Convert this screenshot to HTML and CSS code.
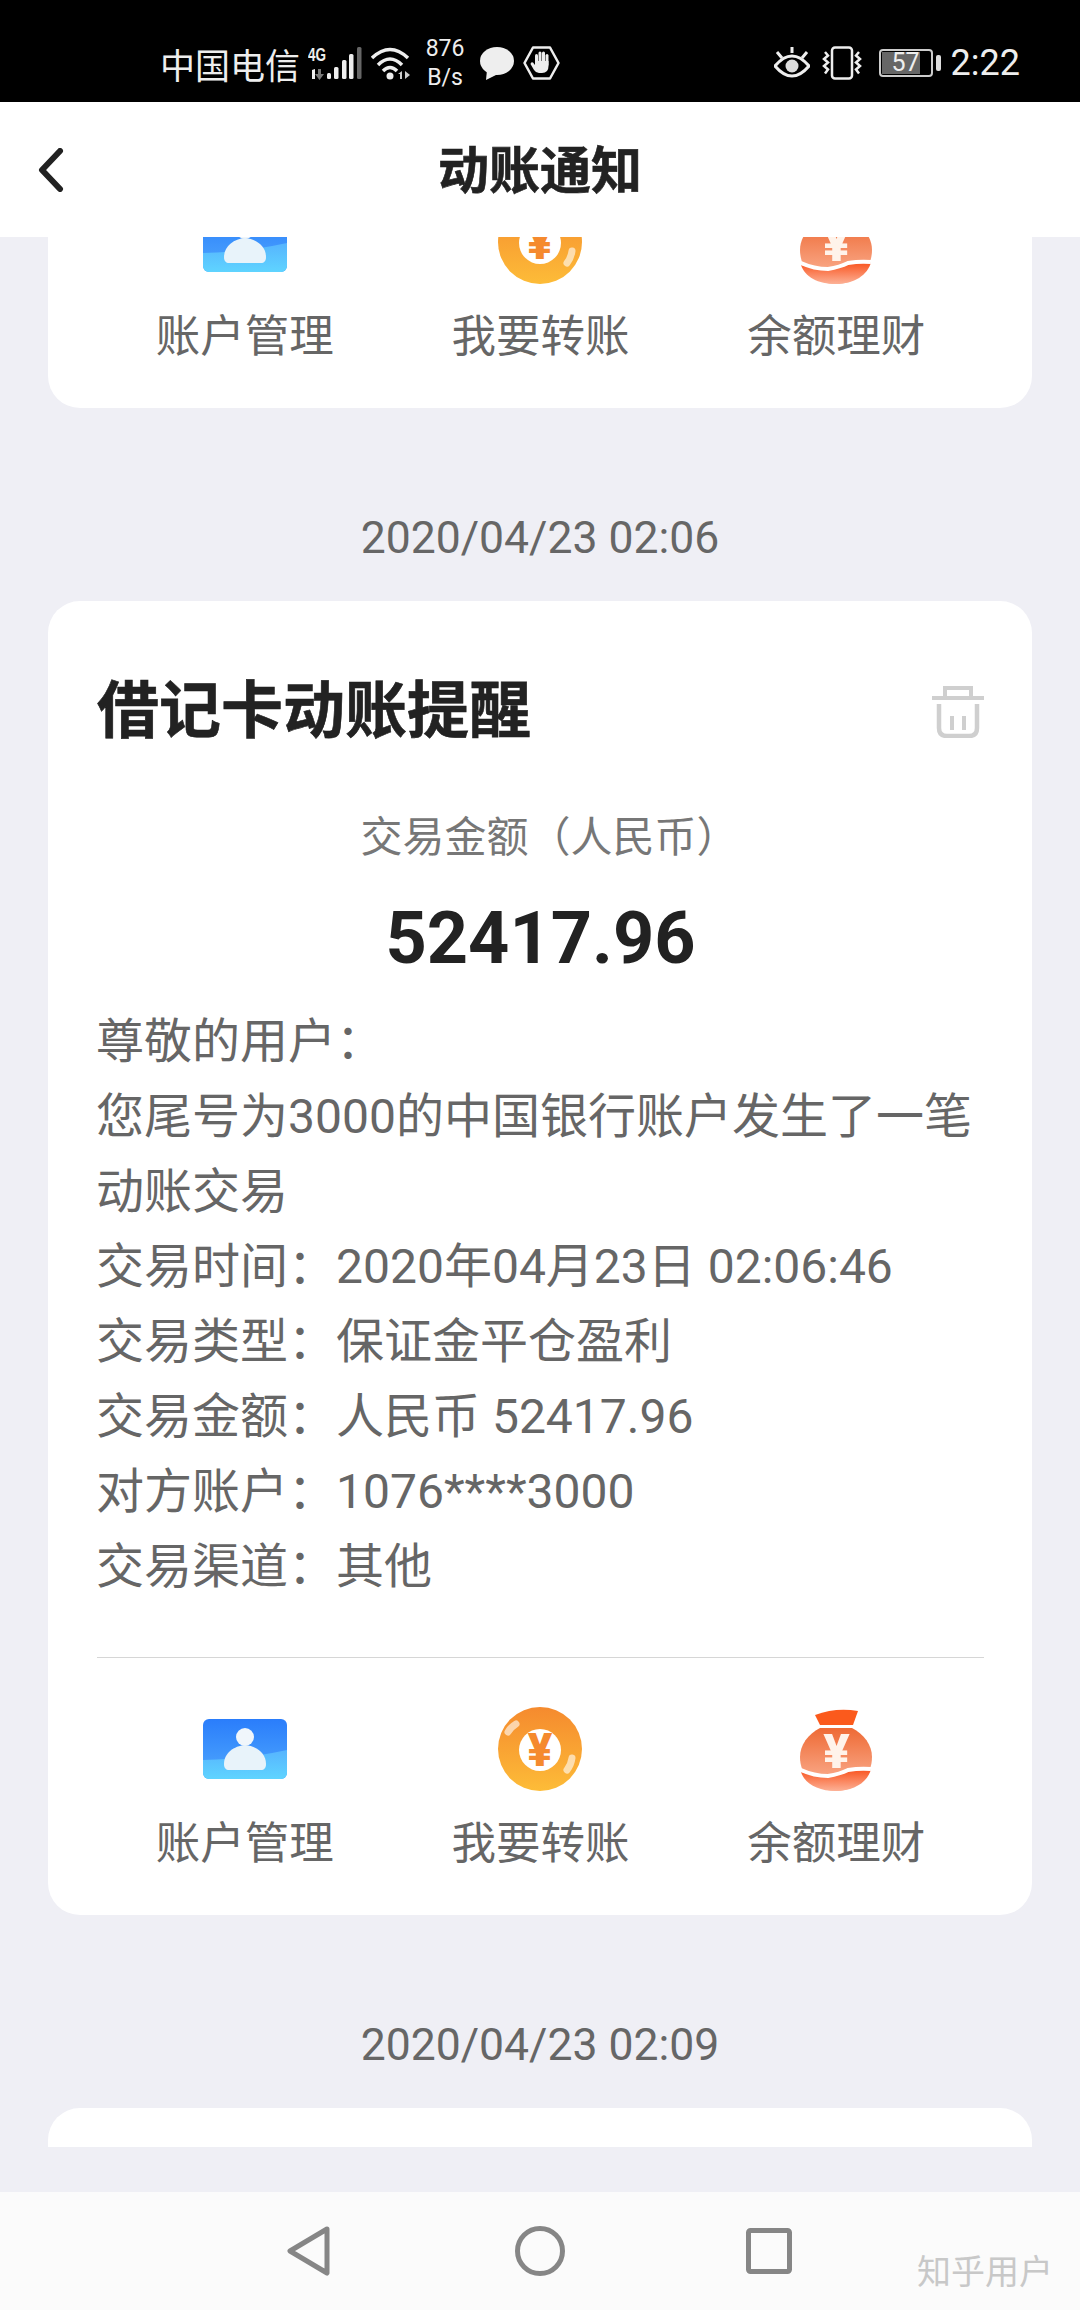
FILE: index.html
```html
<!DOCTYPE html>
<html lang="zh-CN">
<head>
    <meta charset="UTF-8">
    <meta name="viewport" content="width=device-width, initial-scale=1.0">
    <title>动账通知</title>
    <link rel="stylesheet" href="styles.css">
</head>
<body>
    <svg class="sprites" width="0" height="0" aria-hidden="true">
        <defs>
            <linearGradient id="blue-grad" x1="0" y1="0" x2="0" y2="1">
                <stop offset="0" stop-color="#2a7dfb"/>
                <stop offset="1" stop-color="#4fa8fd"/>
            </linearGradient>
            <linearGradient id="blue-low" x1="0" y1="0" x2="0" y2="1">
                <stop offset="0" stop-color="#56b4fe"/>
                <stop offset="1" stop-color="#5fd4ff"/>
            </linearGradient>
            <linearGradient id="coin-grad" x1="0" y1="0" x2="0" y2="1">
                <stop offset="0" stop-color="#f58a2e"/>
                <stop offset="1" stop-color="#fdbc38"/>
            </linearGradient>
            <linearGradient id="bag-grad" x1="0" y1="0" x2="0" y2="1">
                <stop offset="0" stop-color="#ee6a35"/>
                <stop offset="1" stop-color="#fcb79b"/>
            </linearGradient>
            <linearGradient id="bag-low" x1="0" y1="0" x2="0" y2="1">
                <stop offset="0" stop-color="#f9501a"/>
                <stop offset="1" stop-color="#fcb196"/>
            </linearGradient>
            <symbol id="icon-account" viewBox="0 0 84 60">
                <rect width="84" height="60" rx="6" fill="url(#blue-grad)"/>
                <path d="M0 41 Q44 40 84 31 V54 a6 6 0 0 1 -6 6 H6 a6 6 0 0 1 -6 -6 Z" fill="url(#blue-low)"/>
                <circle cx="42" cy="18" r="9" fill="#f0f6fb"/>
                <path d="M21 45 C21 34 31 27 42 26 C53 27 63 34 63 45 C63 49 61 51 58 51 H26 C23 51 21 49 21 45 Z" fill="#e8f3fa"/>
            </symbol>
            <symbol id="icon-transfer" viewBox="0 0 84 84">
                <circle cx="42" cy="42" r="42" fill="url(#coin-grad)"/>
                <circle cx="42" cy="43" r="21" fill="#fff"/>
                <text x="42" y="59" text-anchor="middle" class="coin-yen">¥</text>
                <path d="M10 25 Q13 20 18 17" fill="none" stroke="#fff" stroke-opacity=".6" stroke-width="7" stroke-linecap="round"/>
                <path d="M74 51 Q73 58 69 63" fill="none" stroke="#fff" stroke-opacity=".6" stroke-width="7" stroke-linecap="round"/>
            </symbol>
            <symbol id="icon-finance" viewBox="0 0 72 84">
                <path d="M15 8 Q36 0 58 4 L53 18 H20 Z" fill="#fb5a1c"/>
                <path d="M20 21 H52 C64 27 72 38 72 50 C72 70 56 84 36 84 C16 84 0 70 0 50 C0 38 8 27 20 21 Z" fill="url(#bag-grad)"/>
                <path d="M1 65 Q14 69 28 69 Q40 67 48 63 Q60 61 71 62 C68 75 54 84 36 84 C18 84 5 77 1 65 Z" fill="url(#bag-low)"/>
                <path d="M1 63 Q14 69 28 69 Q40 67 48 63 Q60 61 71 62" fill="none" stroke="#fff" stroke-width="4"/>
                <text x="36.500" y="61" text-anchor="middle" class="bag-yen">¥</text>
            </symbol>
        </defs>
    </svg>

    <div class="phone">
        <div class="status-bar">
            <div class="status-left">
                <span class="carrier">中国电信</span>
                <svg class="ic-signal" width="54" height="33" viewBox="0 0 54 33">
                    <text x="0" y="14" textLength="18" lengthAdjust="spacingAndGlyphs" class="net-label">4G</text>
                    <path d="M4 23l3-1v10h-3z" fill="#eee"/>
                    <path d="M10 22h3v5h3l-4.500 6-4.500-6h3z" fill="#777"/>
                    <rect x="19" y="26" width="4" height="6" rx="1.500" fill="#eee"/>
                    <rect x="26" y="20" width="4.500" height="12" rx="1.500" fill="#eee"/>
                    <rect x="34" y="13" width="4.500" height="19" rx="1.500" fill="#eee"/>
                    <rect x="41" y="7" width="4.500" height="25" rx="1.500" fill="#eee"/>
                    <rect x="49" y="0" width="4.500" height="32" rx="1.500" fill="#666"/>
                </svg>
                <svg class="ic-wifi" width="40" height="34" viewBox="0 0 40 34">
                    <path d="M1 12 Q19 -5 37 12" fill="none" stroke="#eee" stroke-width="3.500"/>
                    <path d="M7 19 Q19 7 31 19" fill="none" stroke="#eee" stroke-width="3.500"/>
                    <path d="M12 25 Q19 18 26 25" fill="none" stroke="#eee" stroke-width="3.500"/>
                    <circle cx="19" cy="30" r="3.500" fill="#eee"/>
                    <path d="M27 28l4-3v8h-2v-5zM34 25l5 4-5 4z" fill="#ccc"/>
                </svg>
                <div class="net-speed"><span>876</span><span>B/s</span></div>
                <svg class="ic-chat" width="34" height="33" viewBox="0 0 34 33">
                    <ellipse cx="17" cy="14" rx="17" ry="14" fill="#eee"/>
                    <path d="M7 23 L6 33 L18 27 Z" fill="#eee"/>
                </svg>
                <svg class="ic-hand" width="37" height="34" viewBox="0 0 37 34">
                    <path d="M10 1.500 H27 L35.500 17 L27 32.500 H10 L1.500 17 Z" fill="none" stroke="#eee" stroke-width="2.500" stroke-linejoin="round"/>
                    <rect x="12" y="8" width="3" height="12" rx="1.500" fill="#eee"/>
                    <rect x="15.500" y="5.500" width="3" height="14" rx="1.500" fill="#eee"/>
                    <rect x="19" y="5.500" width="3" height="14" rx="1.500" fill="#eee"/>
                    <rect x="22.500" y="8" width="3" height="12" rx="1.500" fill="#eee"/>
                    <path d="M12 15 H25.500 V20 Q25.500 27 19 27 H16 Q13 27 11 24 L7.500 18 Q8 15.500 10 16.500 L12 19 Z" fill="#eee"/>
                </svg>
            </div>
            <div class="status-right">
                <svg class="ic-eye" width="36" height="32" viewBox="0 0 36 32">
                    <path d="M1 20 Q18 0 35 20 Q18 40 1 20 Z" transform="translate(0 -1)" fill="none" stroke="#eee" stroke-width="3"/>
                    <circle cx="18" cy="19" r="6.500" fill="#ddd"/>
                    <path d="M18 0v6M3 5l5 6M33 5l-5 6" stroke="#eee" stroke-width="3"/>
                </svg>
                <svg class="ic-vibrate" width="42" height="34" viewBox="0 0 42 34">
                    <rect x="11" y="1.500" width="20" height="31" rx="3" fill="none" stroke="#eee" stroke-width="2.500"/>
                    <path d="M4 6 l3 3.500 l-4 3.500 l4 3.500 l-4 3.500 l4 3.500 l-3 4" fill="none" stroke="#eee" stroke-width="2.500"/>
                    <path d="M38 6 l-3 3.500 l4 3.500 l-4 3.500 l4 3.500 l-4 3.500 l3 4" fill="none" stroke="#eee" stroke-width="2.500"/>
                </svg>
                <div class="battery">
                    <div class="battery-body">
                        <div class="battery-level"></div>
                        <span class="battery-text">57</span>
                    </div>
                    <div class="battery-nub"></div>
                </div>
                <span class="clock">2:22</span>
            </div>
        </div>

        <header class="app-header">
            <svg class="back-icon" width="26" height="44" viewBox="0 0 26 44">
                <path d="M22 3 L4 22 L22 41" fill="none" stroke="#222" stroke-width="6" stroke-linecap="round" stroke-linejoin="round"/>
            </svg>
            <h1 class="app-title">动账通知</h1>
        </header>

        <main class="content">
            <div class="feed">
                <section class="card card-cut">
                    <div class="actions">
                        <div class="action">
                            <div class="action-icon"><svg width="84" height="60"><use href="#icon-account"/></svg></div>
                            <span>账户管理</span>
                        </div>
                        <div class="action">
                            <div class="action-icon"><svg width="84" height="84"><use href="#icon-transfer"/></svg></div>
                            <span>我要转账</span>
                        </div>
                        <div class="action">
                            <div class="action-icon"><svg width="72" height="84"><use href="#icon-finance"/></svg></div>
                            <span>余额理财</span>
                        </div>
                    </div>
                </section>

                <div class="msg-date">2020/04/23 02:06</div>

                <section class="card">
                    <div class="card-head">
                        <h2 class="card-title">借记卡动账提醒</h2>
                        <svg class="trash" width="52" height="52" viewBox="0 0 52 52">
                            <path d="M0 12 H52 M13 12 V2 H39 V12" fill="none" stroke="#cfcfcf" stroke-width="4"/>
                            <path d="M7 18 V42 Q7 50 15 50 H37 Q45 50 45 42 V18" fill="none" stroke="#cfcfcf" stroke-width="4.500"/>
                            <path d="M20 30 V44 M32 30 V44" stroke="#cfcfcf" stroke-width="4"/>
                        </svg>
                    </div>
                    <p class="amount-label">交易金额（人民币）</p>
                    <p class="amount">52417.96</p>
                    <div class="detail">
                        <p>尊敬的用户：</p>
                        <p>您尾号为3000的中国银行账户发生了一笔动账交易</p>
                        <p>交易时间：2020年04月23日 02:06:46</p>
                        <p>交易类型：保证金平仓盈利</p>
                        <p>交易金额：人民币 52417.96</p>
                        <p>对方账户：1076****3000</p>
                        <p>交易渠道：其他</p>
                    </div>
                    <div class="actions">
                        <div class="action">
                            <div class="action-icon"><svg width="84" height="60"><use href="#icon-account"/></svg></div>
                            <span>账户管理</span>
                        </div>
                        <div class="action">
                            <div class="action-icon"><svg width="84" height="84"><use href="#icon-transfer"/></svg></div>
                            <span>我要转账</span>
                        </div>
                        <div class="action">
                            <div class="action-icon"><svg width="72" height="84"><use href="#icon-finance"/></svg></div>
                            <span>余额理财</span>
                        </div>
                    </div>
                </section>

                <div class="msg-date">2020/04/23 02:09</div>

                <section class="card card-next"></section>
            </div>
        </main>

        <nav class="nav-bar">
            <svg width="44" height="50" viewBox="0 0 44 50">
                <path d="M40 3 L3 25 L40 47 Z" fill="none" stroke="#868686" stroke-width="5" stroke-linejoin="round"/>
            </svg>
            <svg width="50" height="50" viewBox="0 0 50 50">
                <circle cx="25" cy="25" r="22.500" fill="none" stroke="#868686" stroke-width="5"/>
            </svg>
            <svg width="46" height="46" viewBox="0 0 46 46">
                <rect x="2.500" y="2.500" width="41" height="41" rx="2" fill="none" stroke="#868686" stroke-width="5"/>
            </svg>
            <span class="watermark">知乎用户</span>
        </nav>
    </div>
</body>
</html>
```

FILE: styles.css
```css
* {
    box-sizing: border-box;
}

html, body {
    margin: 0;
    padding: 0;
}

body {
    font-family: Roboto, "Noto Sans CJK SC", sans-serif;
    color: #666;
}

p, h1, h2 {
    margin: 0;
    font-weight: normal;
}

.sprites {
    position: absolute;
}

.phone {
    width: 1080px;
    height: 2310px;
    display: flex;
    flex-direction: column;
    background-color: #efeff5;
    overflow: hidden;
}

/* status bar */
.status-bar {
    height: 102px;
    flex-shrink: 0;
    padding: 24px 60px 0 160px;
    display: flex;
    justify-content: space-between;
    align-items: center;
    background-color: #000;
    color: #eee;
}

.status-left, .status-right {
    display: flex;
    align-items: center;
}

.carrier {
    font-size: 35px;
    margin-right: 8px;
    white-space: nowrap;
}

.net-label {
    font: bold 19px "Liberation Sans", sans-serif;
    fill: #eee;
}

.ic-wifi {
    margin-left: 9px;
}

.net-speed {
    width: 40px;
    margin-left: 14px;
    display: flex;
    flex-direction: column;
    align-items: center;
    font-size: 23px;
    line-height: 29px;
}

.ic-chat {
    margin-left: 15px;
}

.ic-hand {
    margin-left: 9px;
}

.ic-vibrate {
    margin-left: 11px;
}

.battery {
    margin-left: 16px;
    display: flex;
    align-items: center;
}

.battery-body {
    width: 54px;
    height: 28px;
    position: relative;
    border: 2px solid #ccc;
    border-radius: 4px;
    display: flex;
    align-items: center;
    justify-content: center;
}

.battery-level {
    position: absolute;
    left: 1px;
    top: 1px;
    bottom: 1px;
    width: 38px;
    background-color: #666;
}

.battery-text {
    position: relative;
    font-size: 25px;
    line-height: 24px;
}

.battery-nub {
    width: 5px;
    height: 16px;
    margin-left: 3px;
    border-radius: 2px;
    background-color: #ddd;
}

.clock {
    margin-left: 10px;
    font-size: 36px;
}

/* header */
.app-header {
    height: 135px;
    flex-shrink: 0;
    position: relative;
    padding-bottom: 6px;
    display: flex;
    align-items: center;
    justify-content: center;
    background-color: #fff;
    z-index: 1;
}

.back-icon {
    position: absolute;
    left: 38px;
    top: 46px;
}

.app-title {
    font-size: 51px;
    font-weight: bold;
    color: #222;
    -webkit-text-stroke: 0.6px #222;
}

/* message list */
.content {
    flex: 1;
    min-height: 0;
    margin-bottom: 45px;
    overflow: hidden;
}

.feed {
    margin-top: -87px;
    padding: 0 48px;
}

.card {
    padding: 71px 48px 0 49px;
    background-color: #fff;
    border-radius: 32px;
}

.card-cut {
    padding-top: 0;
}

.card-next {
    height: 200px;
}

.msg-date {
    padding: 100px 0 33px;
    font-size: 44.5px;
    line-height: 60px;
    text-align: center;
}

.card-head {
    display: flex;
    align-items: center;
    justify-content: space-between;
}

.card-title {
    font-size: 62px;
    line-height: 80px;
    font-weight: bold;
    color: #222;
    -webkit-text-stroke: 0.6px #222;
}

.amount-label {
    margin-top: 56px;
    padding-left: 18px;
    font-size: 42px;
    line-height: 60px;
    text-align: center;
    color: #777;
    text-spacing-trim: space-all;
    font-kerning: none;
}

.amount {
    margin-top: 26px;
    font-size: 72px;
    line-height: 90px;
    font-weight: bold;
    text-align: center;
    color: #222;
}

.detail {
    margin: 20px 0 0 -1px;
    font-size: 48px;
    line-height: 75px;
}

.actions {
    margin-top: 53px;
    padding: 49px 0 41px;
    display: grid;
    grid-template-columns: repeat(3, 1fr);
    border-top: 1px solid #d6d6d6;
}

.card-cut .actions {
    margin-top: 0;
}

.action {
    display: flex;
    flex-direction: column;
    align-items: center;
    font-size: 44.5px;
    line-height: 60px;
}

.action-icon {
    height: 84px;
    margin-bottom: 23px;
    display: flex;
    align-items: center;
}

.action-icon svg {
    display: block;
}

.coin-yen {
    font: 900 46px Roboto, sans-serif;
    fill: #f58a2e;
}

.bag-yen {
    font: 900 49px Roboto, sans-serif;
    fill: #fff3ea;
}

/* system nav */
.nav-bar {
    height: 118px;
    flex-shrink: 0;
    position: relative;
    padding: 0 0 0 287px;
    display: flex;
    align-items: center;
    background-color: #fbfbfb;
}

.nav-bar svg:nth-child(2) {
    margin-left: 184px;
}

.nav-bar svg:nth-child(3) {
    margin-left: 181px;
}

.watermark {
    position: absolute;
    left: 917px;
    top: 58px;
    font-size: 34px;
    line-height: 44px;
    color: #c8c8c8;
}
```
